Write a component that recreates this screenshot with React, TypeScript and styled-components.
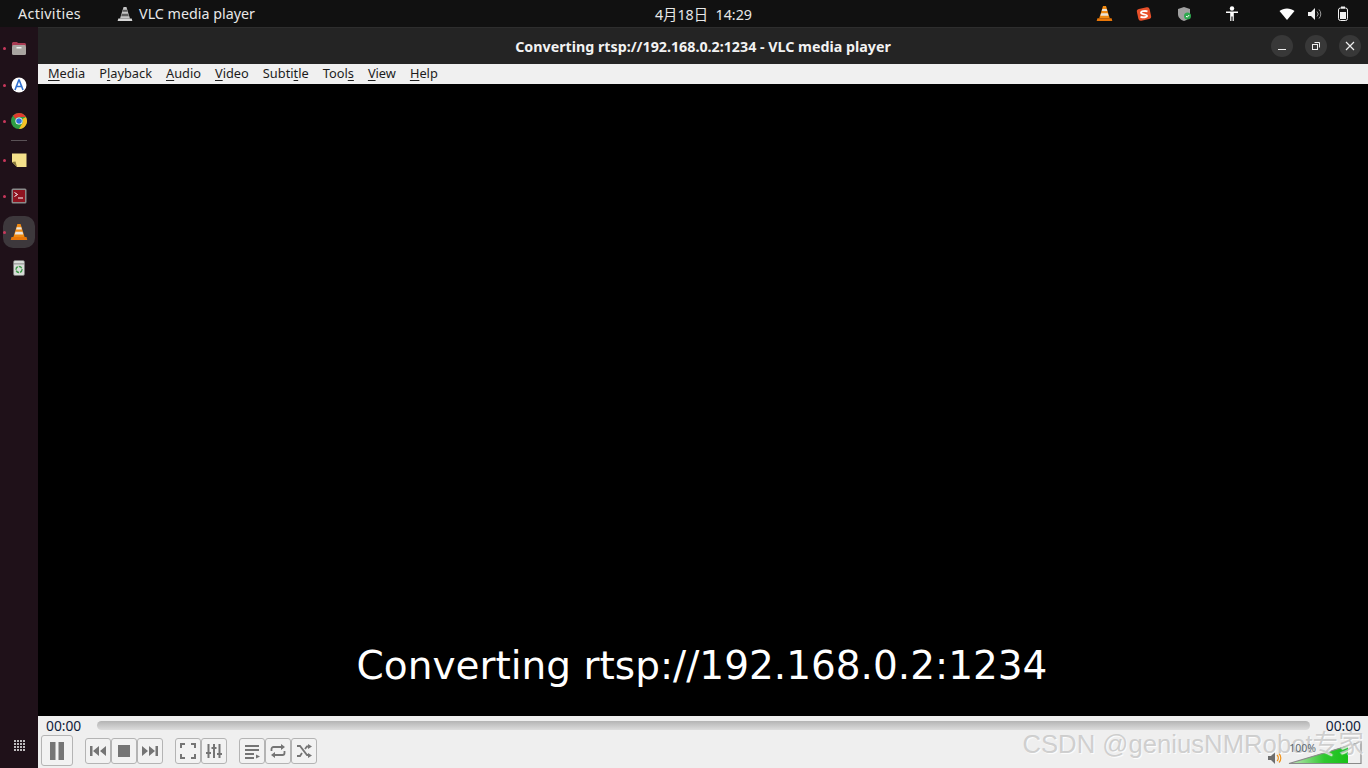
import type { ReactNode } from 'react'
import styled, { createGlobalStyle } from 'styled-components'

const GlobalStyle = createGlobalStyle`
  html, body {
    margin: 0;
    padding: 0;
    background: #000;
  }
  * {
    box-sizing: border-box;
  }
`

const Screen = styled.div`
  width: 1368px;
  height: 768px;
  display: flex;
  flex-direction: column;
  overflow: hidden;
  font-family: "Noto Sans", "Noto Sans CJK SC", sans-serif;
`

const TopBar = styled.header`
  height: 27px;
  flex: none;
  display: grid;
  grid-template-columns: 1fr auto 1fr;
  align-items: center;
  background: #111111;
  color: #e8e8e8;
  font-size: 14.3px;
`

const TopLeft = styled.div`
  display: flex;
  align-items: center;
  padding-left: 18px;
`

const Activities = styled.span`
  letter-spacing: 0.35px;
`

const AppName = styled.div`
  display: flex;
  align-items: center;
  gap: 6px;
  margin-left: 36px;
`

const Clock = styled.div`
  font-size: 14.3px;
  white-space: pre;
  padding-left: 39px;
`

const Tray = styled.div`
  display: flex;
  align-items: center;
  justify-content: flex-end;
  padding-right: 11px;
`

const TraySlot = styled.div<{ $w: number; $gap?: number }>`
  width: ${p => p.$w}px;
  margin-left: ${p => p.$gap ?? 0}px;
  display: flex;
  justify-content: center;
`

const Body = styled.div`
  flex: 1;
  display: flex;
  min-height: 0;
`

const Dock = styled.nav`
  width: 38px;
  flex: none;
  display: flex;
  flex-direction: column;
  align-items: center;
  padding-top: 5px;
  background: #1f1119;
`

const DockItem = styled.div<{ $active?: boolean }>`
  position: relative;
  width: 32px;
  height: 32px;
  margin-bottom: 4px;
  display: flex;
  align-items: center;
  justify-content: center;
  border-radius: 10px;
  background: ${p => (p.$active ? '#3d383c' : 'transparent')};

  &:first-child {
    margin-bottom: 5px;
  }
`

const RunDot = styled.span`
  position: absolute;
  left: 0;
  top: 15px;
  width: 3px;
  height: 3px;
  border-radius: 50%;
  background: #c8385c;
`

const DockRule = styled.div`
  width: 16px;
  height: 1px;
  margin: -1px 0 3px;
  background: #5a5256;
`

const AppGrid = styled.div`
  margin-top: auto;
  margin-bottom: 17px;
  display: grid;
  grid-template-columns: repeat(4, 2px);
  gap: 1px;

  span {
    width: 2px;
    height: 2px;
    border-radius: 50%;
    background: #f4f4f4;
  }
`

const Window = styled.main`
  flex: 1;
  display: flex;
  flex-direction: column;
  min-width: 0;
`

const TitleBar = styled.div`
  position: relative;
  height: 37px;
  flex: none;
  display: flex;
  align-items: center;
  justify-content: center;
  background: #242424;
  border-top: 1px solid #2e2e2e;
  color: #f2f2f2;
  font-size: 14.25px;
  font-weight: 700;
`

const WindowButtons = styled.div`
  position: absolute;
  right: 7px;
  top: 7px;
  display: flex;
  gap: 12px;
`

const WindowButton = styled.div`
  width: 22px;
  height: 22px;
  border-radius: 50%;
  background: #383838;
  display: flex;
  align-items: center;
  justify-content: center;
`

const MenuBar = styled.div`
  height: 20px;
  flex: none;
  display: flex;
  align-items: center;
  gap: 14px;
  padding: 0 0 2px 10px;
  background: #f0f0f0;
  color: #1c1c1c;
  font-size: 12.8px;

  u {
    text-underline-offset: 2px;
  }
`

const Video = styled.div`
  flex: 1;
  display: flex;
  align-items: flex-end;
  justify-content: center;
  padding: 0 2px 27px 0;
  background: #000;
  color: #fff;
  font-family: "DejaVu Sans", sans-serif;
  font-size: 39px;
  line-height: 46px;
`

const Controls = styled.div`
  position: relative;
  height: 52px;
  flex: none;
  display: flex;
  flex-direction: column;
  background: #efefef;
`

const SeekRow = styled.div`
  display: flex;
  align-items: center;
  height: 18px;
  padding: 1px 7px 0 8px;
  gap: 16px;
  color: #10203a;
  font-size: 13.8px;
  line-height: 16px;
`

const SeekTrack = styled.div`
  flex: 1;
  height: 9px;
  margin-top: -1px;
  border-radius: 5px;
  background: linear-gradient(#b4b4b4, #dcdcdc);
`

const ButtonRow = styled.div`
  display: flex;
  align-items: flex-start;
  padding-left: 3px;
`

const PlayButton = styled.div`
  width: 32px;
  height: 31px;
  margin-top: 1px;
  display: flex;
  align-items: center;
  justify-content: center;
  border: 1px solid #b4b4b4;
  border-radius: 3px;
  background: #f2f2f2;
`

const Group = styled.div`
  display: flex;
  margin: 4px 0 0 12px;
`

const ToolButton = styled.div`
  width: 26px;
  height: 26px;
  display: flex;
  align-items: center;
  justify-content: center;
  border: 1px solid #b4b4b4;
  border-radius: 3px;
  background: #f2f2f2;
`

const VolumeArea = styled.div`
  position: absolute;
  right: 6px;
  bottom: 3px;
  display: flex;
  align-items: flex-end;
  gap: 6px;
`

const VolumeLabel = styled.span`
  position: absolute;
  z-index: 1;
  right: 52px;
  bottom: 13px;
  color: #5c6a70;
  font-size: 10.5px;
  line-height: 14px;
`

const Watermark = styled.div`
  position: absolute;
  right: 4px;
  bottom: 11px;
  color: rgba(196, 196, 196, 0.8);
  font-family: "Liberation Sans", "Noto Sans CJK SC", sans-serif;
  font-size: 25.7px;
  line-height: 26px;
  white-space: nowrap;
  text-shadow: 1px 1px 1px rgba(255, 255, 255, 0.9);
`

const Cone = ({ size = 18, grey = false }: { size?: number; grey?: boolean }) => {
  const body = grey ? '#c4c4c4' : '#f08a12'
  const band = grey ? '#5e5e5e' : '#e9e4dc'
  const base = grey ? '#d6d6d6' : '#e87608'
  return (
    <svg width={size} height={size} viewBox="0 0 18 18">
      <path d="M7.4 1h3.2L14.6 14H3.4z" fill={body} />
      <path d="M6.7 4.2h4.6l.6 2.200H6.100z" fill={band} />
      <path d="M5.500 8.800h7l.8 2.600H4.700z" fill={band} />
      <path d="M1.500 14h15l.8 3H.7z" fill={base} />
    </svg>
  )
}

const Icon = ({ children, w = 16, h = 16 }: { children: ReactNode; w?: number; h?: number }) => (
  <svg width={w} height={h} viewBox={`0 0 ${w} ${h}`}>
    {children}
  </svg>
)

const GREY = '#757575'

export default function App() {
  return (
    <Screen>
      <GlobalStyle />
      <TopBar>
        <TopLeft>
          <Activities>Activities</Activities>
          <AppName>
            <Cone size={16} grey />
            <span>VLC media player</span>
          </AppName>
        </TopLeft>
        <Clock>4月18日  14:29</Clock>
        <Tray>
          <TraySlot $w={40}>
            <Cone size={17} />
          </TraySlot>
          <TraySlot $w={40}>
            <Icon>
              <rect x="1.5" y="2" width="13" height="12" rx="2.5" fill="#e8502a" transform="rotate(-12 8 8)" />
              <path d="M11.500 5.300C9 4.700 5 5 5 6.800c0 2 6 1 6 3 0 1.700-3.500 1.800-6.500 1" fill="none" stroke="#fff" strokeWidth="1.800" />
            </Icon>
          </TraySlot>
          <TraySlot $w={42}>
            <Icon>
              <path d="M7 1l6 2v5c0 3.5-2.5 5.8-6 7-3.5-1.2-6-3.500-6-7V3z" fill="#a0a0a0" />
              <circle cx="10.5" cy="10" r="3.5" fill="#2fa84f" />
              <path d="M9 10l1.2 1.2L12.2 9" fill="none" stroke="#fff" strokeWidth="1" />
            </Icon>
          </TraySlot>
          <TraySlot $w={52}>
            <Icon>
              <circle cx="8" cy="2.5" r="2.2" fill="#fff" />
              <path d="M2 5.500h12v1.400H9.800V15H8.600v-4.500H7.400V15H6.200V6.900H2z" fill="#fff" />
            </Icon>
          </TraySlot>
          <TraySlot $w={28} $gap={15}>
            <Icon>
              <path d="M.5 5C4.500 1.500 11.500 1.500 15.500 5L8 14z" fill="#fff" />
            </Icon>
          </TraySlot>
          <TraySlot $w={28}>
            <Icon>
              <path d="M1 6h3l4-4v12l-4-4H1z" fill="#f2f2f2" />
              <path d="M10 5.5a3.5 3.5 0 0 1 0 5M12 3.5a6.5 6.5 0 0 1 0 9" fill="none" stroke="#9a9a9a" strokeWidth="1" />
            </Icon>
          </TraySlot>
          <TraySlot $w={28}>
            <Icon>
              <rect x="6" y="0.5" width="4" height="2" fill="#f2f2f2" />
              <rect x="3.5" y="2" width="9" height="12.5" rx="2" fill="none" stroke="#f2f2f2" strokeWidth="1" />
              <rect x="5" y="6" width="6" height="7" fill="#f2f2f2" />
            </Icon>
          </TraySlot>
        </Tray>
      </TopBar>
      <Body>
        <Dock>
          <DockItem>
            <RunDot />
            <Icon>
              <path d="M1 3l1-1h4l1 1h7l1 1v2H1z" fill="#a83a52" />
              <rect x="1" y="5" width="14" height="10" rx="1.5" fill="#a8a4a0" />
              <rect x="5.5" y="7" width="5" height="1.5" fill="#efefef" />
            </Icon>
          </DockItem>
          <DockItem>
            <RunDot />
            <Icon>
              <circle cx="8" cy="8" r="7.5" fill="#fff" />
              <path d="M8 2.500L4 13M8 2.500L12 13M4.500 9.500h7" fill="none" stroke="#2f6fd0" strokeWidth="1.600" />
            </Icon>
          </DockItem>
          <DockItem>
            <RunDot />
            <Icon>
              <circle cx="8" cy="8" r="8" fill="#2e9e44" />
              <path d="M8 0a8 8 0 0 1 6.930 4H8a4 4 0 0 0-3.460 2L2.100 2.600A8 8 0 0 1 8 0z" fill="#e0392e" />
              <path d="M14.930 4A8 8 0 0 1 8 16l3.460-6A4 4 0 0 0 11.460 6z" fill="#f6c026" />
              <circle cx="8" cy="8" r="3.600" fill="#fff" />
              <circle cx="8" cy="8" r="2.800" fill="#2a6fdc" />
            </Icon>
          </DockItem>
          <DockRule />
          <DockItem>
            <RunDot />
            <Icon>
              <path d="M1 1.500h14.500v13.500H6L1 10z" fill="#f4e08a" />
              <path d="M1 10l3.500-.5L6 15z" fill="#8a7a3a" />
            </Icon>
          </DockItem>
          <DockItem>
            <RunDot />
            <Icon>
              <rect x="0.5" y="0.5" width="15" height="15" rx="1.5" fill="#8a8a8a" />
              <rect x="2" y="2" width="12" height="12" fill="#8e1420" />
              <path d="M3.500 4.500L6.500 6.500 3.500 8.500M7 10h5" fill="none" stroke="#fff" strokeWidth="1" />
            </Icon>
          </DockItem>
          <DockItem $active>
            <RunDot />
            <Cone size={18} />
          </DockItem>
          <DockItem>
            <Icon>
              <rect x="2.5" y="0.5" width="11" height="15" rx="1.5" fill="#d8dcd8" stroke="#777" strokeWidth="0.6" />
              <rect x="3" y="3.5" width="10" height="0.8" fill="#777" />
              <circle cx="8" cy="9.5" r="3" fill="none" stroke="#3f9a4a" strokeWidth="1.4" strokeDasharray="3.500 1" />
            </Icon>
          </DockItem>
          <AppGrid>
            {Array.from({ length: 16 }, (_, i) => (
              <span key={i} />
            ))}
          </AppGrid>
        </Dock>
        <Window>
          <TitleBar>
            Converting rtsp://192.168.0.2:1234 - VLC media player
            <WindowButtons>
              <WindowButton>
                <Icon w={10} h={10}>
                  <rect x="1" y="8" width="8" height="1" fill="#eee" />
                </Icon>
              </WindowButton>
              <WindowButton>
                <Icon w={10} h={10}>
                  <rect x="1.5" y="3.5" width="5" height="5" fill="none" stroke="#eee" />
                  <path d="M3.500 1.500h5v5" fill="none" stroke="#eee" />
                </Icon>
              </WindowButton>
              <WindowButton>
                <Icon w={10} h={10}>
                  <path d="M1 1l8 8M9 1l-8 8" stroke="#eee" strokeWidth="1.2" />
                </Icon>
              </WindowButton>
            </WindowButtons>
          </TitleBar>
          <MenuBar>
            <span><u>M</u>edia</span>
            <span>P<u>l</u>ayback</span>
            <span><u>A</u>udio</span>
            <span><u>V</u>ideo</span>
            <span>Subti<u>t</u>le</span>
            <span>Tool<u>s</u></span>
            <span><u>V</u>iew</span>
            <span><u>H</u>elp</span>
          </MenuBar>
          <Video>Converting rtsp://192.168.0.2:1234</Video>
          <Controls>
            <SeekRow>
              <span>00:00</span>
              <SeekTrack />
              <span>00:00</span>
            </SeekRow>
            <ButtonRow>
              <PlayButton>
                <Icon w={14} h={18}>
                  <rect x="0" y="0" width="5.5" height="18" fill={GREY} />
                  <rect x="8.5" y="0" width="5.5" height="18" fill={GREY} />
                </Icon>
              </PlayButton>
              <Group>
                <ToolButton>
                  <Icon w={16} h={10}>
                    <rect x="0" y="0" width="2.5" height="10" fill={GREY} />
                    <path d="M9 0v10L3 5zM16 0v10L10 5z" fill={GREY} />
                  </Icon>
                </ToolButton>
                <ToolButton>
                  <Icon w={12} h={12}>
                    <rect width="12" height="12" fill={GREY} />
                  </Icon>
                </ToolButton>
                <ToolButton>
                  <Icon w={16} h={10}>
                    <rect x="13.5" y="0" width="2.5" height="10" fill={GREY} />
                    <path d="M0 0v10l6-5zM7 0v10l6-5z" fill={GREY} />
                  </Icon>
                </ToolButton>
              </Group>
              <Group>
                <ToolButton>
                  <Icon>
                    <path d="M1 5V1h4M11 1h4v4M15 11v4h-4M5 15H1v-4" fill="none" stroke={GREY} strokeWidth="2" />
                  </Icon>
                </ToolButton>
                <ToolButton>
                  <Icon>
                    <path d="M2.500 1v14M8 1v14M13.500 1v14" stroke={GREY} strokeWidth="2" />
                    <path d="M0 9h5v2H0zM5.500 4h5v2h-5zM11 10h5v2h-5z" fill={GREY} />
                  </Icon>
                </ToolButton>
              </Group>
              <Group>
                <ToolButton>
                  <Icon>
                    <path d="M1 3h14M1 7h14M1 11h9M1 15h9" stroke={GREY} strokeWidth="1.8" />
                    <path d="M12 11.500v4l4-2z" fill={GREY} />
                  </Icon>
                </ToolButton>
                <ToolButton>
                  <Icon>
                    <path d="M1.500 8V6a2 2 0 0 1 2-2H12M14.500 8v2a2 2 0 0 1-2 2H4" fill="none" stroke={GREY} strokeWidth="1.8" />
                    <path d="M11 1l4 3-4 3zM5 9l-4 3 4 3z" fill={GREY} />
                  </Icon>
                </ToolButton>
                <ToolButton>
                  <Icon>
                    <path d="M1 3l3 0 7 9h2M1 13h3l2-3M9 6l2-2.500h2" fill="none" stroke={GREY} strokeWidth="1.8" />
                    <path d="M12 1l4 2.500L12 6zM12 10l4 2.500L12 15z" fill={GREY} />
                  </Icon>
                </ToolButton>
              </Group>
            </ButtonRow>
            <VolumeArea>
              <Icon w={14} h={14}>
                <path d="M0 5h3l4-4v12l-4-4H0z" fill="#6e6e6e" />
                <path d="M9 4a4 4 0 0 1 0 6M11 2.500a6.500 6.500 0 0 1 0 9" fill="none" stroke="#f0931a" strokeWidth="1.2" />
              </Icon>
              <svg width="74" height="24" viewBox="0 0 74 24">
                <defs>
                  <linearGradient id="vol" x1="0" x2="1" y1="0" y2="0">
                    <stop offset="0" stopColor="#c8e8c0" />
                    <stop offset="0.6" stopColor="#30c830" />
                    <stop offset="1" stopColor="#18c018" />
                  </linearGradient>
                </defs>
                <path d="M1 22.500L60 4.500v18z" fill="url(#vol)" />
                <path d="M1 22.500L73 1v21.500z" fill="none" stroke="#8a8a8a" strokeWidth="1.2" />
              </svg>
            </VolumeArea>
            <VolumeLabel>100%</VolumeLabel>
            <Watermark>CSDN @geniusNMRobot专家</Watermark>
          </Controls>
        </Window>
      </Body>
    </Screen>
  )
}
